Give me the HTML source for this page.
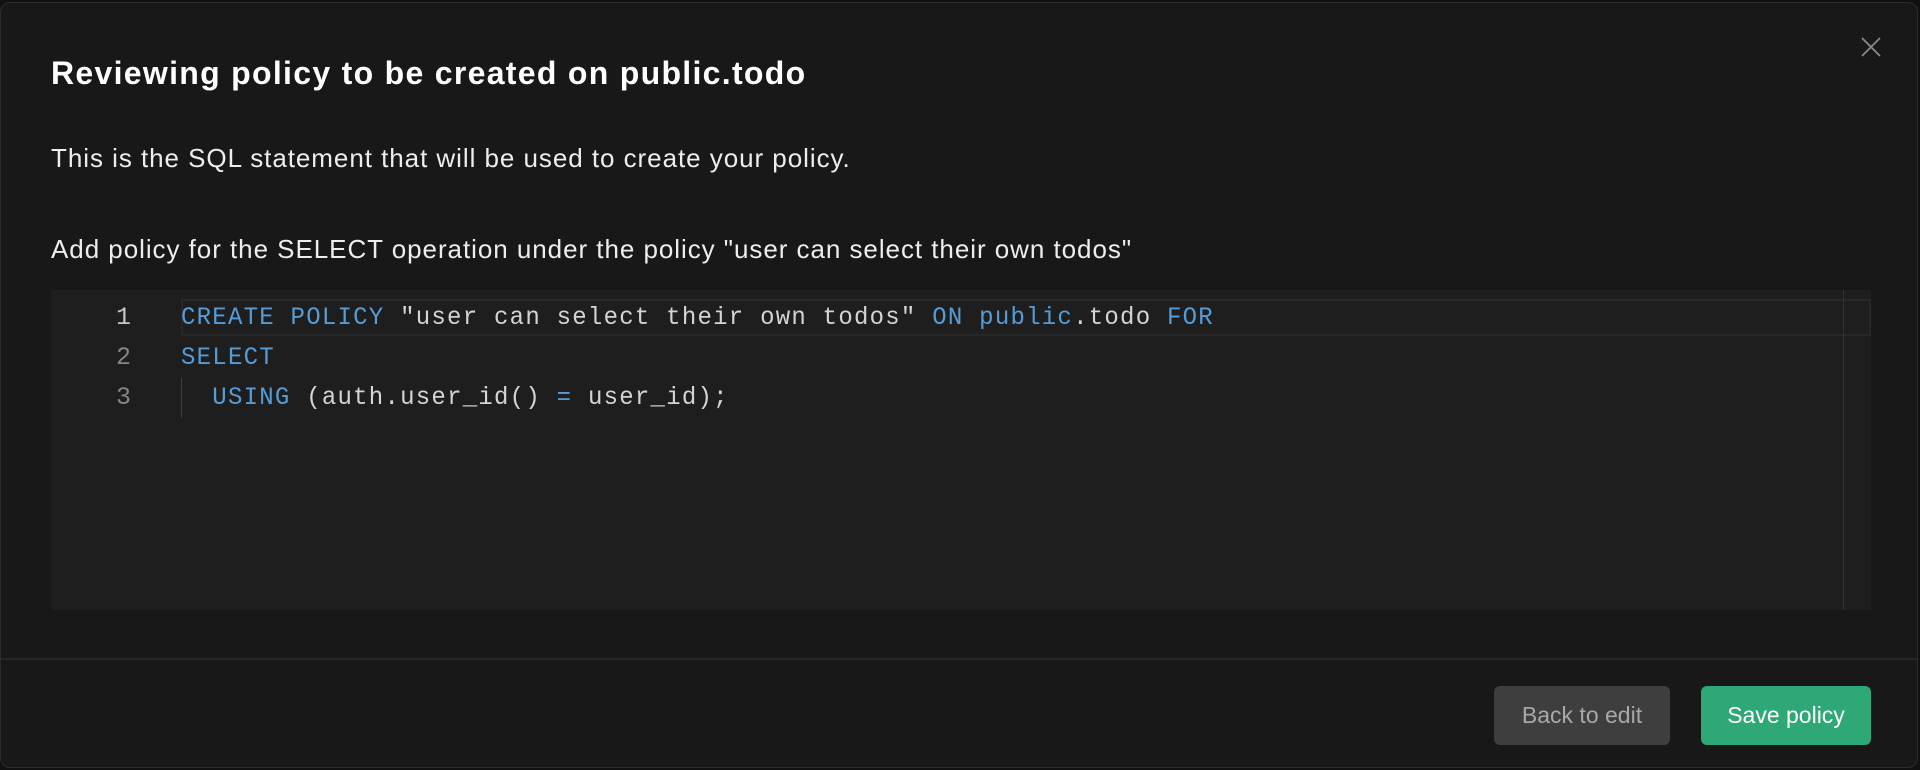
<!DOCTYPE html>
<html><head><meta charset="utf-8"><style>
*{margin:0;padding:0;box-sizing:border-box}
body{width:1920px;height:770px;background:#111;overflow:hidden;font-family:"Liberation Sans",sans-serif;position:relative}
.modal{position:absolute;left:0;top:2px;width:1918px;height:766px;background:#181818;border:1px solid #2c2c2c;border-radius:10px}
.t{position:absolute;color:#fff;white-space:nowrap}
.code{position:absolute;left:50px;top:289px;width:1820px;height:320px;background:#1e1e1e}
.ln{position:absolute;left:0;width:80px;text-align:right;color:#858585;font:25px "Liberation Mono",monospace}
.cl{position:absolute;left:130px;color:#d4d4d4;font:25px "Liberation Mono",monospace;letter-spacing:1.3px;white-space:pre;transform:scaleX(0.96);transform-origin:left}
.k{color:#569cd6}
.btn{position:absolute;top:683px;height:59px;border-radius:6px;font-size:23px;display:flex;align-items:center;justify-content:center}
</style></head><body>
<div class="modal">
<div class="t" style="left:50px;top:52px;font-size:32px;font-weight:bold;letter-spacing:1.3px">Reviewing policy to be created on public.todo</div>
<svg style="position:absolute;left:1859px;top:33px" width="22" height="22" viewBox="0 0 22 22"><path d="M2 2L20 20M20 2L2 20" stroke="#8a8a8a" stroke-width="1.8"/></svg>
<div class="t" style="left:50px;top:140px;font-size:26px;letter-spacing:0.95px;color:#ededed">This is the SQL statement that will be used to create your policy.</div>
<div class="t" style="left:50px;top:231px;font-size:26px;letter-spacing:0.95px;color:#ededed">Add policy for the SELECT operation under the policy "user can select their own todos"</div>
<div class="code" style="top:287px">
<div style="position:absolute;left:130px;top:9px;width:1690px;height:37px;border:2px solid #282828"></div>
<div style="position:absolute;left:1792px;top:0;width:1px;height:320px;background:#333"></div>
<div style="position:absolute;left:130px;top:88px;width:1px;height:40px;background:#404040"></div>
<div class="ln" style="top:13px;color:#c6c6c6">1</div>
<div class="ln" style="top:53px">2</div>
<div class="ln" style="top:93px">3</div>
<div class="cl" style="top:13px"><span class="k">CREATE POLICY</span> "user can select their own todos" <span class="k">ON public</span>.todo <span class="k">FOR</span></div>
<div class="cl" style="top:53px"><span class="k">SELECT</span></div>
<div class="cl" style="top:93px">  <span class="k">USING</span> (auth.user_id() <span class="k">=</span> user_id);</div>
</div>
<div style="position:absolute;left:0;top:655px;width:1916px;height:2px;background:#262626"></div>
<div class="btn" style="left:1493px;width:176px;background:#3e3e3e;color:#a8a8a8">Back to edit</div>
<div class="btn" style="left:1700px;width:170px;background:#2ea876;color:#fff">Save policy</div>
</div>
</body></html>
